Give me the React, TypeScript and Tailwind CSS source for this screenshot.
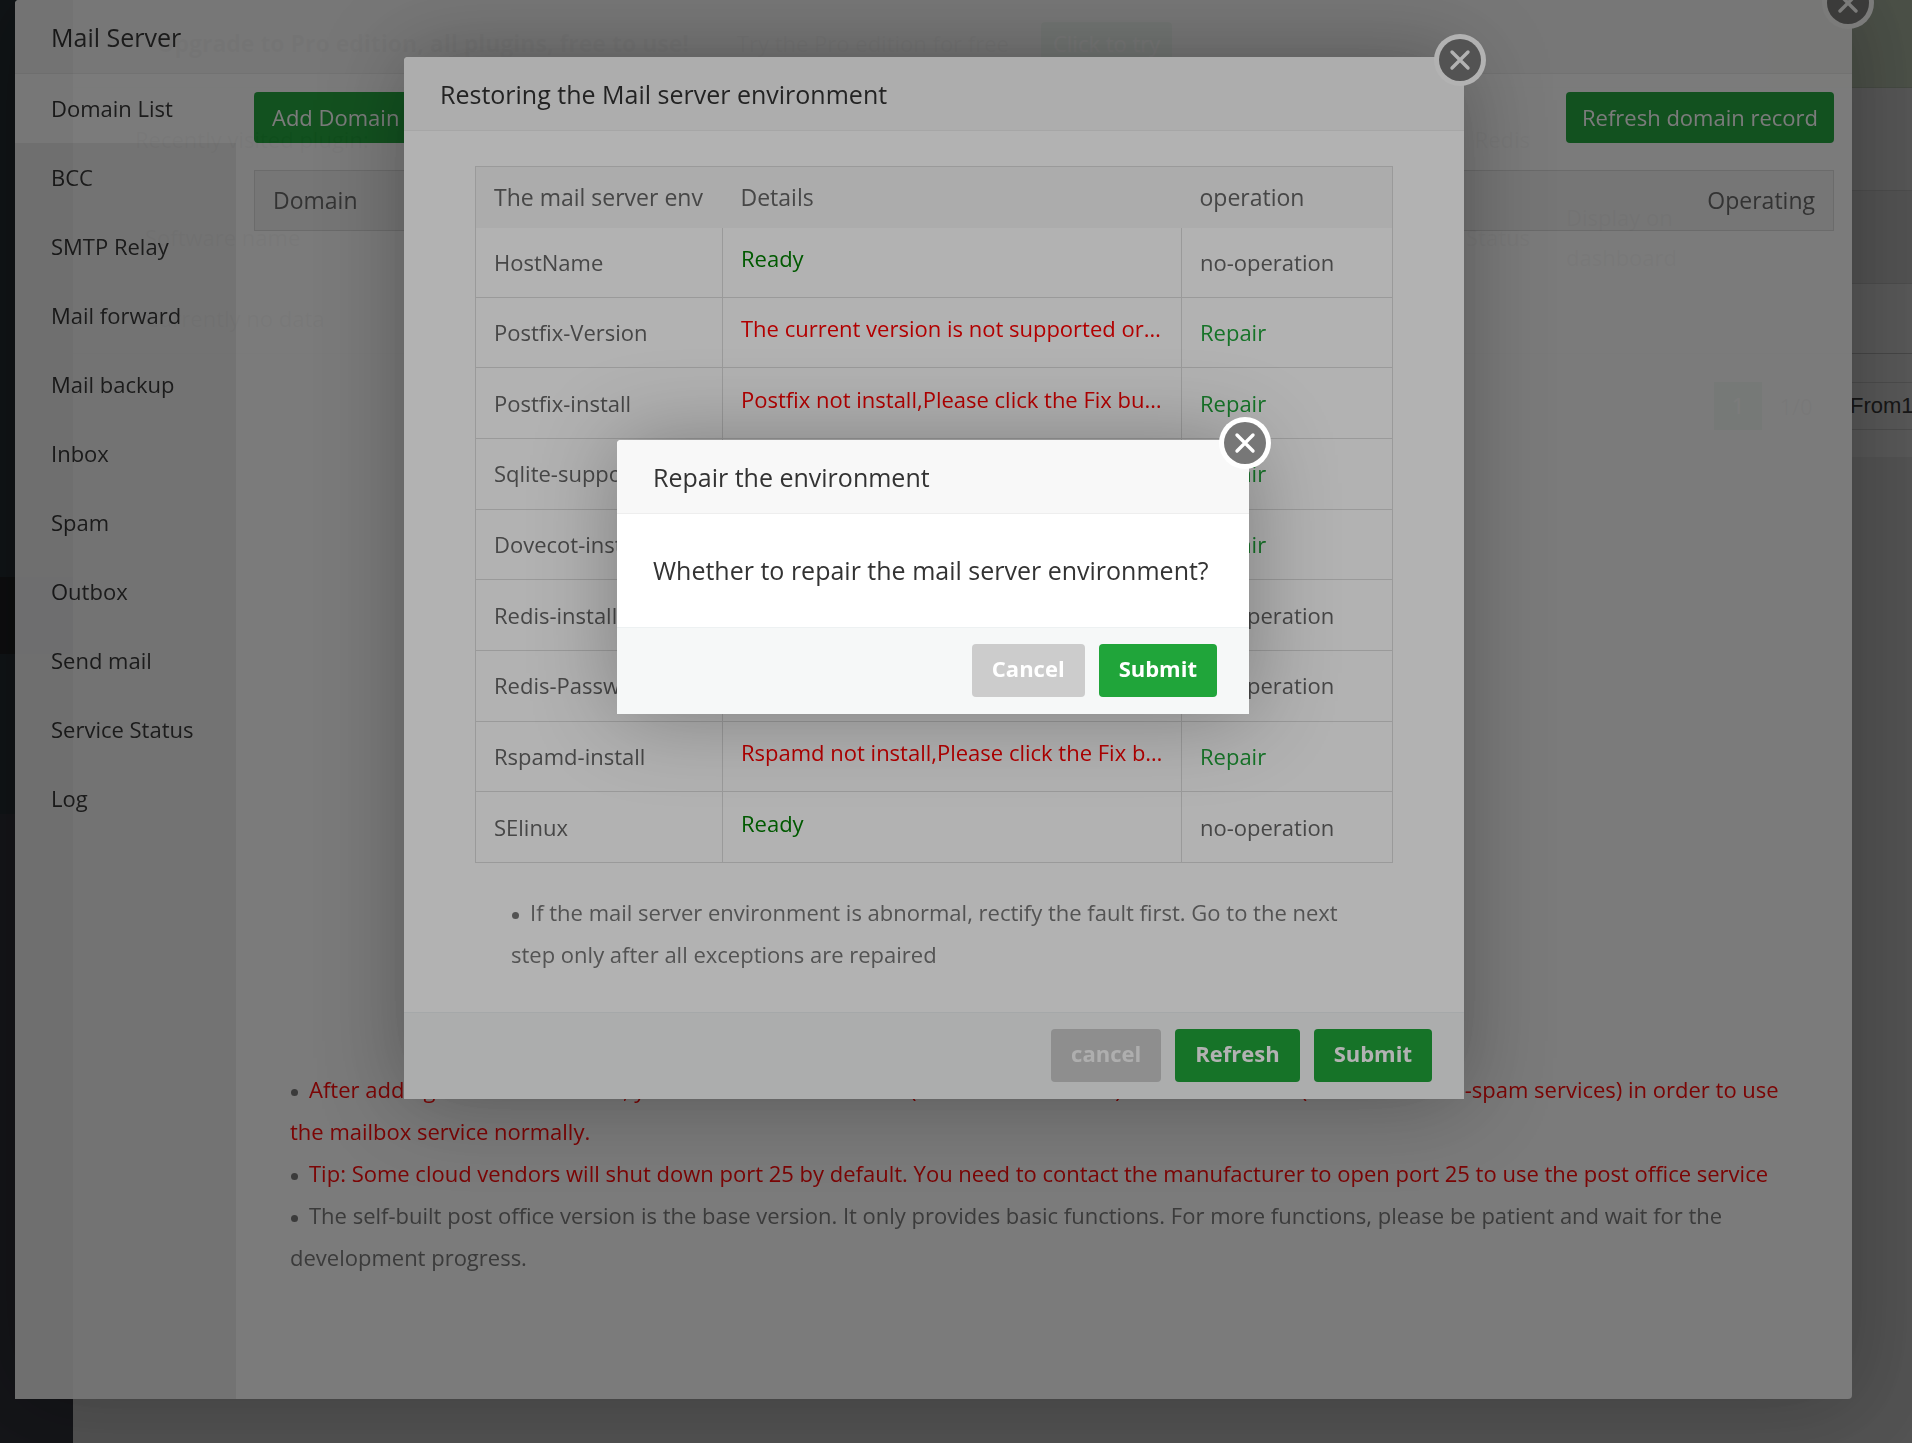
import React from "react";

const MENU = ["Domain List", "BCC", "SMTP Relay", "Mail forward", "Mail backup", "Inbox", "Spam", "Outbox", "Send mail", "Service Status", "Log"];

const ROWS = [
  { name: "HostName", detail: "Ready", ok: true, repair: false },
  { name: "Postfix-Version", detail: "The current version is not supported or Postfix is not installed", ok: false, repair: true },
  { name: "Postfix-install", detail: "Postfix not install,Please click the Fix button", ok: false, repair: true },
  { name: "Sqlite-support", detail: "Postfix does not support Sqlite", ok: false, repair: true },
  { name: "Dovecot-install", detail: "Dovecot not install,Please click the Fix button", ok: false, repair: true },
  { name: "Redis-install", detail: "Ready", ok: true, repair: false },
  { name: "Redis-Passwd", detail: "Ready", ok: true, repair: false },
  { name: "Rspamd-install", detail: "Rspamd not install,Please click the Fix button", ok: false, repair: true },
  { name: "SElinux", detail: "Ready", ok: true, repair: false },
];

type Children = { children: React.ReactNode };

function CloseButton() {
  return (
    <button aria-label="Close" className="absolute -top-[23px] -right-[22px] size-[52px]">
      <svg viewBox="0 0 52 52" className="size-full">
        <circle cx="26" cy="26" r="26" fill="#fff" />
        <circle cx="26" cy="26" r="21" fill="#777" />
        <path d="M18 18 L34 34 M34 18 L18 34" stroke="#fff" strokeWidth="3.4" strokeLinecap="round" />
      </svg>
    </button>
  );
}

function Bullet() {
  return <span className="mr-[11px] ml-px inline-block size-[7px] rounded-full bg-[#777] align-middle" />;
}

function DialogTitle({ children }: Children) {
  return (
    <h2 className="h-[74px] shrink-0 rounded-t-sm border-b border-[#eee] bg-[#f8f8f8] px-9 text-[25px] leading-[74px]">
      {children}
    </h2>
  );
}

function DialogFooter({ children }: Children) {
  return (
    <footer className="flex h-[87px] justify-end gap-[14px] border-t border-[#edf1f2] bg-[#f6f8f8] pt-4 pr-8">
      {children}
    </footer>
  );
}

// the software store page that stays dimmed under the dialogs
function PanelPage() {
  return (
    <div className="flex min-h-screen bg-[#f0f0f0] text-[22px] text-[#777]">
      <nav className="w-[73px] shrink-0 bg-[#3c3e48]">
        <div className="h-[577px] bg-[#2f3b41]" />
        <div className="h-[77px] bg-[#27282b]" />
        <div className="h-[160px] bg-[#2f3b41]" />
      </nav>
      <main className="flex-1 overflow-hidden">
        <div className="flex h-[88px] items-center border-b border-[#c9d6c0] bg-linear-to-r from-[#eee] from-80% to-[#dbe9d0] to-95% pl-[84px]">
          <span className="text-[23px] font-bold">Upgrade to Pro edition, all plugins, free to use!</span>
          <span className="ml-12">Try the Pro edition for free</span>
          <button className="ml-8 h-11 rounded bg-[#20a53a] px-3 text-white">Click to try</button>
        </div>
        <div className="flex h-[102px] items-center justify-between bg-[#f8f8f8] pr-[382px] pl-[62px]">
          <span>Recently visited plugin:</span>
          <span>Redis</span>
        </div>
        <div className="flex h-[94px] items-center border-y border-[#ddd] bg-[#eee] pr-[236px] pl-[72px]">
          <span className="flex-1">Software name</span>
          <span className="w-[100px]">Status</span>
          <span className="w-[110px] leading-10">Display on dashboard</span>
        </div>
        <div className="flex h-[70px] items-center border-b border-[#ccc] bg-white pl-[72px]">Currently no data</div>
        <div className="flex h-[103px] items-center justify-end bg-white">
          <span className="flex size-12 items-center justify-center bg-[#20a53a] text-white">1</span>
          <span className="w-[68px] border-y border-[#ddd] text-center leading-[46px]">1/0</span>
          <span className="w-[82px] border-y border-[#ddd] pl-5 font-['Liberation_Sans',sans-serif] text-[22px] leading-[46px] text-[#444]">From1</span>
        </div>
      </main>
    </div>
  );
}

function MailServerDialog() {
  return (
    <section className="relative flex min-h-[calc(100vh-44px)] w-[calc(100vw-75px)] flex-col rounded-sm bg-white opacity-95 shadow-[1px_1px_88px_rgba(0,0,0,0.3)]">
      <DialogTitle>Mail Server</DialogTitle>
      <div className="flex flex-1">
        <nav className="flex w-[221px] shrink-0 flex-col bg-[#f0f0f0]">
          {MENU.map((item, i) => (
            <a key={item} href="#" className={`h-[69px] pl-9 leading-[69px] ${i === 0 ? "bg-white" : ""}`}>
              {item}
            </a>
          ))}
        </nav>
        <div className="flex flex-1 flex-col px-[18px] pt-[18px]">
          <div className="flex justify-between">
            <button className="h-[51px] rounded bg-[#20a53a] px-[18px] text-white">Add Domain</button>
            <button className="h-[51px] rounded bg-[#20a53a] px-4 text-white">Refresh domain record</button>
          </div>
          <table className="mt-[27px] w-full border border-[#ddd] bg-[#f6f6f6] text-[23px] text-[#666]">
            <thead>
              <tr className="h-[60px]">
                <th className="px-[18px] text-left font-normal">Domain</th>
                <th className="px-[18px] text-right font-normal">Operating</th>
              </tr>
            </thead>
          </table>
          <ul className="mt-auto mb-[121px] px-9 leading-[42px] text-[#777]">
            <li>
              <Bullet />
              <span className="text-[red]">
                After adding the domain name, you need to set MX record (domain resolutions) and PTR records (needed for anti-spam services) in order to use the mailbox service normally.
              </span>
            </li>
            <li>
              <Bullet />
              <span className="text-[red]">
                Tip: Some cloud vendors will shut down port 25 by default. You need to contact the manufacturer to open port 25 to use the post office service
              </span>
            </li>
            <li>
              <Bullet />
              The self-built post office version is the base version. It only provides basic functions. For more functions, please be patient and wait for the development progress.
            </li>
          </ul>
        </div>
      </div>
      <CloseButton />
    </section>
  );
}

function RestoreDialog() {
  return (
    <section className="relative w-[1060px] rounded-sm bg-white shadow-[1px_1px_88px_rgba(0,0,0,0.3)]">
      <DialogTitle>Restoring the Mail server environment</DialogTitle>
      <div className="px-[71px] pt-[35px]">
        <table className="h-[697px] w-full table-fixed border-collapse border border-[#ddd] text-[#666]">
          <thead>
            <tr className="h-[61px] bg-[#f6f6f6] text-left text-[23px]">
              <th className="w-[247px] px-[18px] font-normal whitespace-nowrap">The mail server env</th>
              <th className="px-[18px] font-normal">Details</th>
              <th className="w-[211px] px-[18px] font-normal">operation</th>
            </tr>
          </thead>
          <tbody>
            {ROWS.map((row) => (
              <tr key={row.name}>
                <td className="border-b border-[#ddd] px-[18px]">{row.name}</td>
                <td className={`truncate border border-t-0 border-[#ddd] px-[18px] pb-2 ${row.ok ? "text-[green]" : "text-[red]"}`}>{row.detail}</td>
                <td className="border-b border-[#ddd] px-[18px]">
                  {row.repair ? <a href="#" className="text-[#20a53a]">Repair</a> : "no-operation"}
                </td>
              </tr>
            ))}
          </tbody>
        </table>
        <ul className="px-9 pt-7 pb-[37px] leading-[42px] text-[#777]">
          <li>
            <Bullet />
            If the mail server environment is abnormal, rectify the fault first. Go to the next step only after all exceptions are repaired
          </li>
        </ul>
      </div>
      <DialogFooter>
        <button className="h-[53px] rounded bg-[#ccc] px-5 pb-1 font-bold text-white/90">cancel</button>
        <button className="h-[53px] rounded bg-[#20a53a] px-5 pb-1 font-bold text-white">Refresh</button>
        <button className="h-[53px] rounded bg-[#20a53a] px-5 pb-1 font-bold text-white">Submit</button>
      </DialogFooter>
      <CloseButton />
    </section>
  );
}

function ConfirmDialog() {
  return (
    <section className="relative w-[632px] rounded-sm bg-white shadow-[1px_1px_88px_rgba(0,0,0,0.3)]">
      <DialogTitle>Repair the environment</DialogTitle>
      <p className="h-[113px] px-9 text-[25px] leading-[113px] whitespace-nowrap">Whether to repair the mail server environment?</p>
      <DialogFooter>
        <button className="h-[53px] rounded bg-[#ccc] px-5 pb-1 font-bold text-white">Cancel</button>
        <button className="h-[53px] rounded bg-[#20a53a] px-5 pb-1 font-bold text-white">Submit</button>
      </DialogFooter>
      <CloseButton />
    </section>
  );
}

export default function App() {
  return (
    <div className="h-screen overflow-hidden font-['Open_Sans',sans-serif] text-[22px] text-[#333]">
      <PanelPage />
      <div className="fixed inset-0 flex items-start justify-center bg-black/30 pr-[45px]">
        <MailServerDialog />
      </div>
      <div className="fixed inset-0 flex items-start justify-center bg-black/30 pt-[57px] pr-11">
        <RestoreDialog />
      </div>
      <div className="fixed inset-0 flex items-start justify-center bg-black/30 pt-[440px] pr-[46px]">
        <ConfirmDialog />
      </div>
    </div>
  );
}
